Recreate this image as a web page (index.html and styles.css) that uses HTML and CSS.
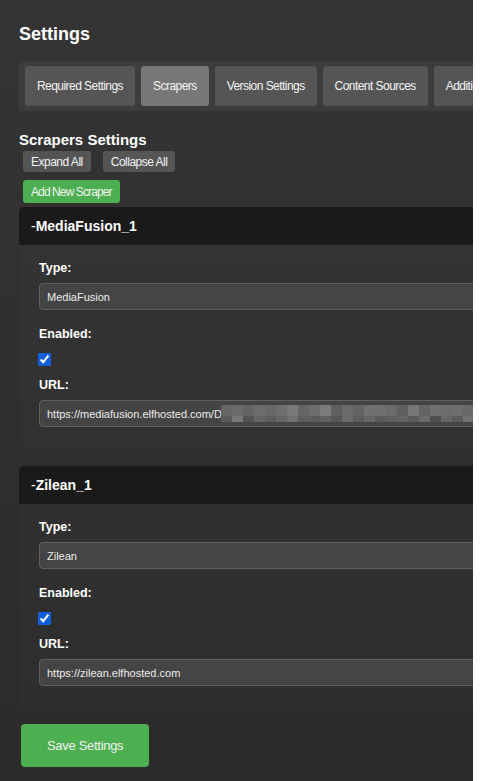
FILE: index.html
```html
<!DOCTYPE html>
<html lang="en">
<head>
<meta charset="utf-8">
<title>Settings</title>
<link rel="stylesheet" href="styles.css">
</head>
<body>
<div class="viewport">
  <div class="app">
    <h1 class="page-title">Settings</h1>
    <nav class="tabbar">
      <button class="tab">Required Settings</button>
      <button class="tab tab-active">Scrapers</button>
      <button class="tab">Version Settings</button>
      <button class="tab">Content Sources</button>
      <button class="tab">Additional Settings</button>
    </nav>
    <h2 class="section-title">Scrapers Settings</h2>
    <div class="btn-row">
      <button class="btn btn-gray">Expand All</button>
      <button class="btn btn-gray">Collapse All</button>
    </div>
    <button class="btn btn-green btn-add">Add New Scraper</button>

    <div class="scrapers">
      <section class="scraper">
        <div class="scraper-header"><span class="dash">-</span>MediaFusion_1</div>
        <div class="scraper-body">
          <label class="field-label">Type:</label>
          <select class="field-input field-select"><option>MediaFusion</option></select>
          <label class="field-label">Enabled:</label>
          <input class="field-check" type="checkbox" checked>
          <label class="field-label">URL:</label>
          <div class="field-wrap">
            <input class="field-input field-last" type="text" value="https://mediafusion.elfhosted.com/D-W">
            <span class="mosaic"></span>
          </div>
        </div>
      </section>

      <section class="scraper">
        <div class="scraper-header"><span class="dash">-</span>Zilean_1</div>
        <div class="scraper-body">
          <label class="field-label">Type:</label>
          <select class="field-input field-select"><option>Zilean</option></select>
          <label class="field-label">Enabled:</label>
          <input class="field-check" type="checkbox" checked>
          <label class="field-label">URL:</label>
          <div class="field-wrap">
            <input class="field-input field-last" type="text" value="https://zilean.elfhosted.com">
          </div>
        </div>
      </section>
    </div>

    <button class="btn btn-green btn-save">Save Settings</button>
  </div>
</div>
</body>
</html>
```
FILE: styles.css
```css
html, body {
  margin: 0;
  padding: 0;
  background: #ffffff;
}

.viewport {
  width: 473px;
  height: 100vh;
  overflow: hidden;
  background: linear-gradient(to bottom, #343434 0%, #2b2b2b 100%);
  font-family: "Liberation Sans", Arial, sans-serif;
  color: #ffffff;
}

.app {
  width: 620px;
  padding: 24px 0 0 19px;
  box-sizing: border-box;
}

.page-title {
  margin: 0 0 17px;
  font-size: 18px;
  line-height: 21px;
  font-weight: bold;
}

.tabbar {
  display: flex;
  gap: 6px;
  padding: 4px 6px 5px;
  background: #3c3c3c;
  border-radius: 4px;
  margin-bottom: 20px;
}

.tab {
  flex-shrink: 0;
  height: 40px;
  padding: 0 12px;
  border: none;
  border-radius: 3px;
  background: #555555;
  color: #f4f4f4;
  font-family: "Liberation Sans", Arial, sans-serif;
  font-size: 12px;
  letter-spacing: -0.55px;
}

.tab-active {
  background: #777777;
}

.section-title {
  margin: 0 0 2px;
  font-size: 15px;
  line-height: 18px;
  font-weight: bold;
}

.btn-row {
  display: flex;
  gap: 12px;
  margin-left: 4px;
}

.btn {
  border: none;
  border-radius: 3px;
  color: #f2f2f2;
  font-family: "Liberation Sans", Arial, sans-serif;
  font-size: 12px;
  letter-spacing: -0.5px;
  padding: 0 8px;
  display: block;
}

.btn-gray {
  height: 21px;
  background: #555555;
}

.btn-green {
  background: #4caf50;
}

.btn-add {
  height: 23px;
  margin: 8px 0 4px 4px;
  letter-spacing: -0.9px;
}

.scrapers {
  display: flex;
  flex-direction: column;
  gap: 19px;
}

.scraper {
  border-radius: 5px;
  overflow: hidden;
  background: rgba(255, 255, 255, 0.012);
}

.scraper-header {
  height: 38px;
  line-height: 38px;
  padding: 0 12px;
  background: #1a1a1a;
  font-size: 14px;
  font-weight: bold;
}

.dash {
  font-weight: normal;
}

.scraper-body {
  padding: 16px 20px 20px;
}

.field-label {
  display: block;
  font-size: 12.5px;
  line-height: 15px;
  font-weight: bold;
  margin-bottom: 7px;
}

.field-input {
  display: block;
  width: 100%;
  height: 27px;
  box-sizing: border-box;
  margin: 0 0 17px;
  padding: 0 7px;
  background: #444444;
  border: 1px solid #606060;
  border-radius: 4px;
  color: #ececec;
  font-family: "Liberation Sans", Arial, sans-serif;
  font-size: 11px;
  outline: none;
}

.field-select {
  appearance: none;
  -webkit-appearance: none;
}

.field-last {
  margin-bottom: 0;
}

.field-check {
  display: block;
  width: 13px;
  height: 13px;
  margin: 11px 0 12px -1px;
  accent-color: #0d5fdb;
}

.field-wrap {
  position: relative;
}

.mosaic {
  position: absolute;
  left: 182px;
  top: 5px;
  width: 264px;
  height: 17px;
  background:
    linear-gradient(to right, #666 0 11px,#6a6a6a 11px 22px,#646464 22px 33px,#6c6c6c 33px 44px,#676767 44px 55px,#6e6e6e 55px 66px,#7a7a7a 66px 77px,#656565 77px 88px,#6d6d6d 88px 99px,#7b7b7b 99px 110px,#5f5f5f 110px 121px,#6a6a6a 121px 132px,#636363 132px 143px,#707070 143px 154px,#6f6f6f 154px 165px,#6b6b6b 165px 176px,#5f5f5f 176px 187px,#767676 187px 198px,#646464 198px 209px,#6f6f6f 209px 220px,#6c6c6c 220px 231px,#6f6f6f 231px 242px,#686868 242px 253px,#6a6a6a 253px 264px) top left / 100% 11px no-repeat,
    linear-gradient(to right, #5a5a5a 0 11px,#777 11px 22px,#545454 22px 33px,#656565 33px 44px,#5c5c5c 44px 55px,#666 55px 66px,#707070 66px 77px,#5e5e5e 77px 88px,#5c5c5c 88px 99px,#626262 99px 110px,#585858 110px 121px,#6a6a6a 121px 132px,#5b5b5b 132px 143px,#666 143px 154px,#5a5a5a 154px 165px,#5e5e5e 165px 176px,#646464 176px 187px,#5b5b5b 187px 198px,#6a6a6a 198px 209px,#505050 209px 220px,#666 220px 231px,#5b5b5b 231px 242px,#707070 242px 253px,#5e5e5e 253px 264px) bottom left / 100% 6px no-repeat;
}

.btn-save {
  height: 43px;
  margin: 18px 0 0 2px;
  padding: 0 26px;
  border-radius: 4px;
  font-size: 13px;
  letter-spacing: -0.3px;
}
```
